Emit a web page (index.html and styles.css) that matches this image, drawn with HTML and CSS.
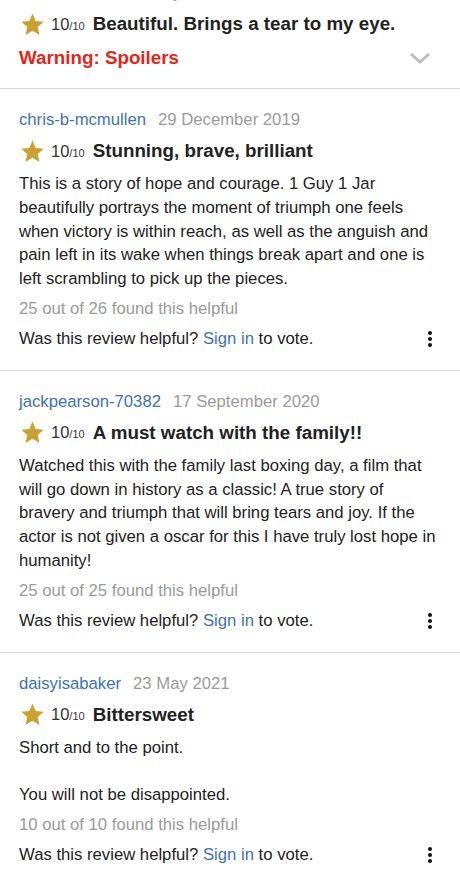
FILE: index.html
```html
<!DOCTYPE html>
<html>
<head>
<meta charset="utf-8">
<link rel="stylesheet" href="styles.css">
</head>
<body>
<div class="list">
  <section class="review first">
    <div class="meta"><span class="user">someone-else</span><span class="date">5 May 2020</span></div>
    <div class="rating">
      <svg class="star" viewBox="0 0 24 24"><path d="M12 1.5l3.1 7.1 7.7.7-5.8 5.1 1.7 7.6L12 18l-6.7 4 1.7-7.6-5.8-5.1 7.7-.7z"/></svg>
      <span class="score">10<small>/10</small></span>
      <span class="title">Beautiful. Brings a tear to my eye.</span>
    </div>
    <div class="spoiler-row">
      <span class="spoiler">Warning: Spoilers</span>
      <svg class="chev" viewBox="0 0 22 12"><path d="M2 2l9 8 9-8"/></svg>
    </div>
  </section>

  <section class="review">
    <div class="meta"><span class="user">chris-b-mcmullen</span><span class="date">29 December 2019</span></div>
    <div class="rating">
      <svg class="star" viewBox="0 0 24 24"><path d="M12 1.5l3.1 7.1 7.7.7-5.8 5.1 1.7 7.6L12 18l-6.7 4 1.7-7.6-5.8-5.1 7.7-.7z"/></svg>
      <span class="score">10<small>/10</small></span>
      <span class="title">Stunning, brave, brilliant</span>
    </div>
    <p class="body">This is a story of hope and courage. 1 Guy 1 Jar beautifully portrays the moment of triumph one feels when victory is within reach, as well as the anguish and pain left in its wake when things break apart and one is left scrambling to pick up the pieces.</p>
    <div class="helpful">25 out of 26 found this helpful</div>
    <div class="vote"><span>Was this review helpful? <a class="link">Sign in</a> to vote.</span><span class="dots"><i></i><i></i><i></i></span></div>
  </section>

  <section class="review">
    <div class="meta"><span class="user">jackpearson-70382</span><span class="date">17 September 2020</span></div>
    <div class="rating">
      <svg class="star" viewBox="0 0 24 24"><path d="M12 1.5l3.1 7.1 7.7.7-5.8 5.1 1.7 7.6L12 18l-6.7 4 1.7-7.6-5.8-5.1 7.7-.7z"/></svg>
      <span class="score">10<small>/10</small></span>
      <span class="title">A must watch with the family!!</span>
    </div>
    <p class="body">Watched this with the family last boxing day, a film that will go down in history as a classic! A true story of bravery and triumph that will bring tears and joy. If the actor is not given a oscar for this I have truly lost hope in humanity!</p>
    <div class="helpful">25 out of 25 found this helpful</div>
    <div class="vote"><span>Was this review helpful? <a class="link">Sign in</a> to vote.</span><span class="dots"><i></i><i></i><i></i></span></div>
  </section>

  <section class="review">
    <div class="meta"><span class="user">daisyisabaker</span><span class="date">23 May 2021</span></div>
    <div class="rating">
      <svg class="star" viewBox="0 0 24 24"><path d="M12 1.5l3.1 7.1 7.7.7-5.8 5.1 1.7 7.6L12 18l-6.7 4 1.7-7.6-5.8-5.1 7.7-.7z"/></svg>
      <span class="score">10<small>/10</small></span>
      <span class="title">Bittersweet</span>
    </div>
    <p class="body">Short and to the point.<br><br>You will not be disappointed.</p>
    <div class="helpful">10 out of 10 found this helpful</div>
    <div class="vote"><span>Was this review helpful? <a class="link">Sign in</a> to vote.</span><span class="dots"><i></i><i></i><i></i></span></div>
  </section>
</div>
</body>
</html>
```

FILE: styles.css
```css
html, body {
  margin: 0;
  padding: 0;
  background: #fff;
}
body {
  font-family: "Liberation Sans", Arial, sans-serif;
  font-size: 16.7px;
  color: #222;
  overflow: hidden;
}
.list {
  margin-top: -38px;
}
.review {
  padding: 19px 19px 19px 19px;
  border-bottom: 1px solid #d9d9d9;
}
.review.first {
  padding-bottom: 15px;
}
.meta {
  line-height: 24px;
  height: 24px;
  display: flex;
  gap: 12px;
}
.user {
  color: #3c72b3;
}
.date {
  color: #9a9a9a;
}
.rating {
  margin-top: 4px;
  height: 30px;
  display: flex;
  align-items: center;
}
.star {
  width: 25px;
  height: 25px;
  fill: #cba131;
  margin-left: 1px;
  margin-right: 6px;
}
.score {
  font-size: 16.5px;
  color: #333;
  margin-right: 8px;
}
.score small {
  font-size: 11px;
}
.title {
  font-size: 18.8px;
  font-weight: bold;
  color: #222;
}
.spoiler-row {
  margin-top: 4px;
  height: 30px;
  display: flex;
  align-items: center;
  justify-content: space-between;
}
.spoiler {
  color: #e3261c;
  font-weight: bold;
  font-size: 18.8px;
}
.chev {
  width: 22px;
  height: 12px;
  margin-right: 10px;
  fill: none;
  stroke: #bdbdbd;
  stroke-width: 3;
}
.body {
  margin: 6px 0 0 0;
  line-height: 23.75px;
  color: #222;
}
.helpful {
  margin-top: 6px;
  line-height: 24px;
  color: #9a9a9a;
}
.vote {
  margin-top: 6px;
  line-height: 24px;
  display: flex;
  justify-content: space-between;
  align-items: center;
  color: #222;
}
.link {
  color: #3c72b3;
}
.dots {
  display: flex;
  flex-direction: column;
  gap: 2px;
  margin-right: 9px;
}
.dots i {
  display: block;
  width: 4px;
  height: 4px;
  border-radius: 50%;
  background: #111;
}
```
